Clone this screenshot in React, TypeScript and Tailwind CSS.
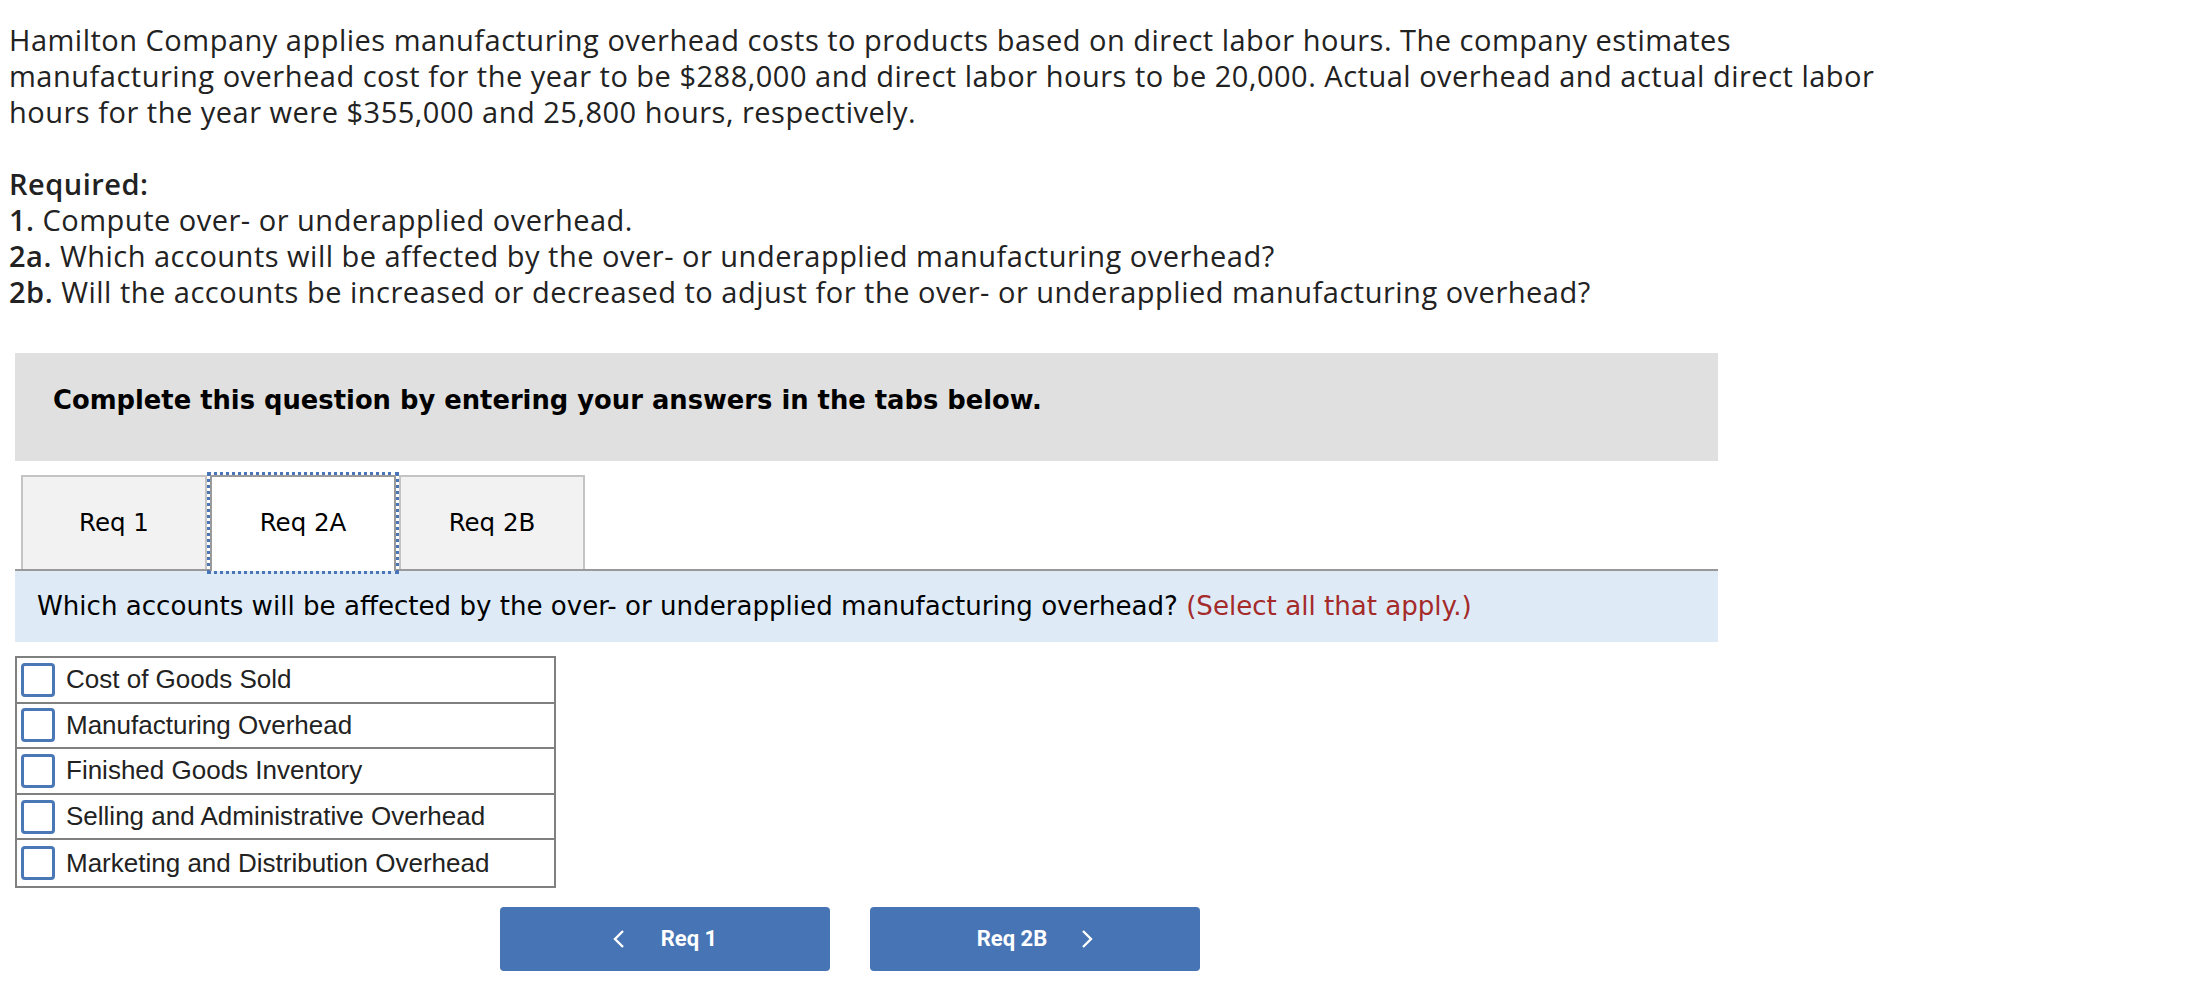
import { useState } from "react";

const ACCOUNTS = [
  "Cost of Goods Sold",
  "Manufacturing Overhead",
  "Finished Goods Inventory",
  "Selling and Administrative Overhead",
  "Marketing and Distribution Overhead",
];

const TABS = ["Req 1", "Req 2A", "Req 2B"];

function Chevron({ dir }: { dir: "left" | "right" }) {
  return (
    <svg width="12" height="18" viewBox="0 0 12 18" className="shrink-0">
      <polyline
        points={dir === "left" ? "10,1 2,9 10,17" : "2,1 10,9 2,17"}
        fill="none"
        stroke="white"
        strokeWidth="2.4"
      />
    </svg>
  );
}

export default function App() {
  const [checked, setChecked] = useState<boolean[]>(ACCOUNTS.map(() => false));
  const active = 1;

  return (
    <div className="h-[986px] w-[2192px] overflow-hidden bg-white pl-[9px] pt-[22px] text-[#222]">
      <div className="whitespace-nowrap font-['Open_Sans',sans-serif] text-[29px] leading-[36px] tracking-[0.5px]">
        <p>
          Hamilton Company applies manufacturing overhead costs to products based on direct labor hours. The company estimates
          <br />
          manufacturing overhead cost for the year to be $288,000 and direct labor hours to be 20,000. Actual overhead and actual direct labor
          <br />
          hours for the year were $355,000 and 25,800 hours, respectively.
        </p>
        <p className="mt-[36px]">
          <b className="font-semibold">Required:</b>
          <br />
          <b className="font-semibold">1.</b> Compute over- or underapplied overhead.
          <br />
          <b className="font-semibold">2a.</b> Which accounts will be affected by the over- or underapplied manufacturing overhead?
          <br />
          <b className="font-semibold">2b.</b> Will the accounts be increased or decreased to adjust for the over- or underapplied manufacturing overhead?
        </p>
      </div>

      <div className="ml-[6px] mt-[43px] w-[1703px]">
        <div className="flex h-[108px] items-start bg-[#e0e0e0] pl-[38px] pt-[28px]">
          <span className="font-['DejaVu_Sans',Verdana,sans-serif] text-[25.8px] font-bold text-black">
            Complete this question by entering your answers in the tabs below.
          </span>
        </div>

        <div className="mt-[14px] flex items-end gap-[3px] border-b-2 border-[#999] pl-[6px]">
          {TABS.map((t, i) =>
            i === active ? (
              <div
                key={t}
                className="relative z-10 -mb-[2px] flex h-[96px] w-[186px] items-center justify-center border-2 border-b-0 border-[#999] bg-white pb-[2px] font-['DejaVu_Sans',Verdana,sans-serif] text-[24.5px] text-black outline-[3px] outline-dotted outline-[#4a76b8]"
              >
                {t}
              </div>
            ) : (
              <div
                key={t}
                className="flex h-[94px] w-[186px] items-center justify-center border-2 border-b-0 border-[#c4c4c4] bg-[#f2f2f2] font-['DejaVu_Sans',Verdana,sans-serif] text-[24.5px] text-black"
              >
                {t}
              </div>
            )
          )}
        </div>

        <div className="flex h-[71px] items-center bg-[#deebf7] pl-[22px] font-['DejaVu_Sans',Verdana,sans-serif] text-[26.1px] text-black">
          Which accounts will be affected by the over- or underapplied manufacturing overhead?&nbsp;
          <span className="text-[#a52a2a]">(Select all that apply.)</span>
        </div>

        <div className="mt-[14px] w-[541px] border-2 border-[#808080]">
          {ACCOUNTS.map((a, i) => (
            <label
              key={a}
              className={`flex h-[45.6px] cursor-pointer items-center gap-[11px] pl-[4px] font-['Liberation_Sans',Arial,sans-serif] text-[26px] text-[#222] ${
                i < ACCOUNTS.length - 1 ? "border-b-2 border-[#808080]" : ""
              }`}
            >
              <span
                onClick={() => setChecked((c) => c.map((v, j) => (j === i ? !v : v)))}
                className="flex h-[34px] w-[34px] shrink-0 items-center justify-center rounded-[4px] border-[3px] border-[#4a77b5] bg-white text-[22px] leading-none text-[#4a77b5]"
              >
                {checked[i] ? "✓" : ""}
              </span>
              {a}
            </label>
          ))}
        </div>

        <div className="ml-[485px] mt-[19px] flex gap-[40px] font-['Roboto',sans-serif] text-[22px] font-bold text-white">
          <button className="flex h-[64px] w-[330px] items-center justify-center gap-[36px] rounded-[4px] bg-[#4674b4]">
            <Chevron dir="left" />
            <span>Req 1</span>
          </button>
          <button className="flex h-[64px] w-[330px] items-center justify-center gap-[34px] rounded-[4px] bg-[#4674b4]">
            <span>Req 2B</span>
            <Chevron dir="right" />
          </button>
        </div>
      </div>
    </div>
  );
}
